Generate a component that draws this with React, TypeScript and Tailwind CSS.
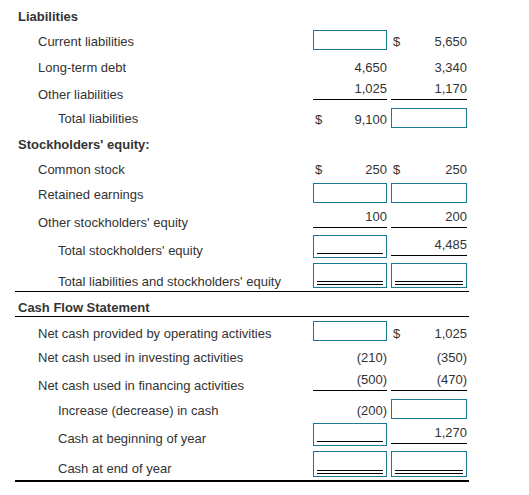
import React from 'react';

const row = 'grid grid-cols-[1fr_74px_76px] gap-x-[4px] pr-[2px] items-start';
const boxBorder = 'border border-[#1b7a93]';

const Label = ({ className, children }: { className: string; children: React.ReactNode }) => (
  <div className={`leading-[17px] whitespace-nowrap ${className}`}>{children}</div>
);

const Val = ({ className = '', dollar, text, line }: { className?: string; dollar?: boolean; text?: string; line?: boolean }) => (
  <div className={`flex justify-between leading-[17px] ${line ? 'pb-[2px] border-b border-black' : ''} ${className}`}>
    <span className="pl-[2px]">{dollar ? '$' : ''}</span>
    <span>{text}</span>
  </div>
);

const Blank = ({ className }: { className: string }) => <div className={`${boxBorder} ${className}`} />;

const LineBox = ({ className }: { className: string }) => (
  <div className={`${boxBorder} flex flex-col justify-end px-[3px] pb-[3px] ${className}`}>
    <div className="h-px bg-black" />
  </div>
);

const DoubleBox = ({ className }: { className: string }) => (
  <div className={`${boxBorder} flex flex-col justify-end px-[3px] pb-[2px] ${className}`}>
    <div className="h-px bg-black" />
    <div className="h-[2px]" />
    <div className="h-px bg-black" />
  </div>
);

export default function App() {
  return (
    <div className="min-h-screen bg-white text-[13px] text-[#333] font-['Liberation_Sans',Arial,sans-serif]">
      <div className="ml-[15px] w-[454px]">
        {/* Liabilities */}
        <div className={`${row} h-[28px]`}>
          <Label className="pt-[8px] pl-[3px] font-bold">Liabilities</Label>
        </div>
        <div className={`${row} h-[26px]`}>
          <Label className="pt-[5px] pl-[23px]">Current liabilities</Label>
          <Blank className="mt-[2px] h-[20px]" />
          <Val className="pt-[5px]" dollar text="5,650" />
        </div>
        <div className={`${row} h-[24px]`}>
          <Label className="pt-[5px] pl-[23px]">Long-term debt</Label>
          <Val className="pt-[5px]" text="4,650" />
          <Val className="pt-[5px]" text="3,340" />
        </div>
        <div className={`${row} h-[28px]`}>
          <Label className="pt-[8px] pl-[23px]">Other liabilities</Label>
          <Val className="pt-[2px]" text="1,025" line />
          <Val className="pt-[2px]" text="1,170" line />
        </div>
        <div className={`${row} h-[24px]`}>
          <Label className="pt-[4px] pl-[43px]">Total liabilities</Label>
          <Val className="pt-[5px]" dollar text="9,100" />
          <Blank className="mt-[2px] h-[20px]" />
        </div>

        {/* Stockholders' equity */}
        <div className={`${row} h-[26px]`}>
          <Label className="pt-[6px] pl-[3px] font-bold">Stockholders' equity:</Label>
        </div>
        <div className={`${row} h-[25px]`}>
          <Label className="pt-[5px] pl-[23px]">Common stock</Label>
          <Val className="pt-[5px]" dollar text="250" />
          <Val className="pt-[5px]" dollar text="250" />
        </div>
        <div className={`${row} h-[24px]`}>
          <Label className="pt-[5px] pl-[23px]">Retained earnings</Label>
          <Blank className="mt-[2px] h-[20px]" />
          <Blank className="mt-[2px] h-[20px]" />
        </div>
        <div className={`${row} h-[28px]`}>
          <Label className="pt-[9px] pl-[23px]">Other stockholders' equity</Label>
          <Val className="pt-[3px]" text="100" line />
          <Val className="pt-[3px]" text="200" line />
        </div>
        <div className={`${row} h-[28px]`}>
          <Label className="pt-[9px] pl-[43px]">Total stockholders' equity</Label>
          <LineBox className="mt-[2px] h-[23px]" />
          <Val className="pt-[3px]" text="4,485" line />
        </div>
        <div className={`${row} h-[31px] border-b border-black`}>
          <Label className="pt-[12px] pl-[43px]">Total liabilities and stockholders' equity</Label>
          <DoubleBox className="mt-[2px] h-[25px]" />
          <DoubleBox className="mt-[2px] h-[25px]" />
        </div>

        {/* Cash flow */}
        <div className={`${row} h-[25px] border-b border-black`}>
          <Label className="pt-[7px] pl-[3px] font-bold">Cash Flow Statement</Label>
        </div>
        <div className={`${row} h-[28px]`}>
          <Label className="pt-[8px] pl-[23px]">Net cash provided by operating activities</Label>
          <Blank className="mt-[4px] h-[20px]" />
          <Val className="pt-[8px]" dollar text="1,025" />
        </div>
        <div className={`${row} h-[24px]`}>
          <Label className="pt-[4px] pl-[23px]">Net cash used in investing activities</Label>
          <Val className="pt-[4px]" text="(210)" />
          <Val className="pt-[4px]" text="(350)" />
        </div>
        <div className={`${row} h-[28px]`}>
          <Label className="pt-[8px] pl-[23px]">Net cash used in financing activities</Label>
          <Val className="pt-[2px]" text="(500)" line />
          <Val className="pt-[2px]" text="(470)" line />
        </div>
        <div className={`${row} h-[24px]`}>
          <Label className="pt-[5px] pl-[43px]">Increase (decrease) in cash</Label>
          <Val className="pt-[5px]" text="(200)" />
          <Blank className="mt-[2px] h-[20px]" />
        </div>
        <div className={`${row} h-[28px]`}>
          <Label className="pt-[9px] pl-[43px]">Cash at beginning of year</Label>
          <LineBox className="mt-[2px] h-[23px]" />
          <Val className="pt-[3px]" text="1,270" line />
        </div>
        <div className={`${row} h-[33px] border-b-2 border-black`}>
          <Label className="pt-[11px] pl-[43px]">Cash at end of year</Label>
          <DoubleBox className="mt-[2px] h-[26px]" />
          <DoubleBox className="mt-[2px] h-[26px]" />
        </div>
      </div>
    </div>
  );
}
